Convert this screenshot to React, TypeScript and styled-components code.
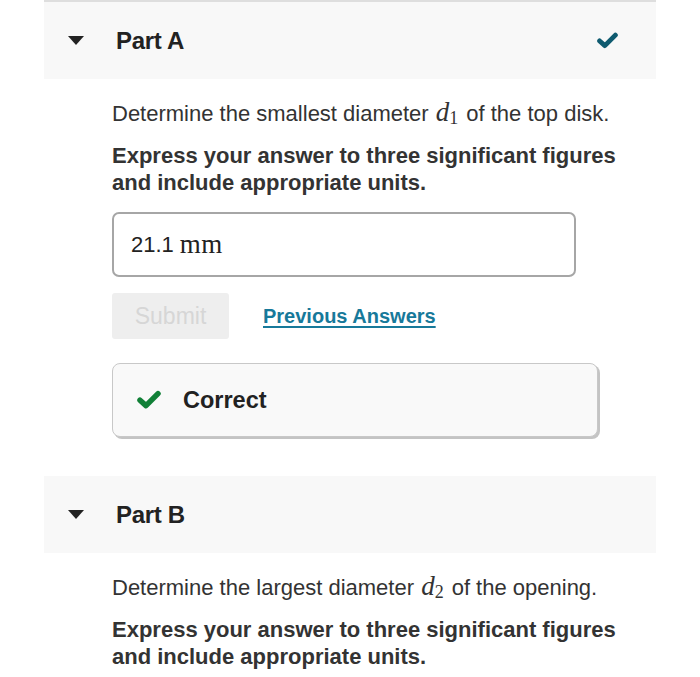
import React from "react";
import styled, { createGlobalStyle } from "styled-components";

const Global = createGlobalStyle`
  html, body { margin: 0; padding: 0; background: #fff; }
  body { font-family: "Liberation Sans", Arial, sans-serif; color: #333; }
`;

const Page = styled.div`
  width: 612px;
  margin: 0 44px;
  border-top: 2px solid #dedede;
`;

const Header = styled.div`
  height: 77px;
  background: #f8f8f8;
  display: flex;
  align-items: center;
  padding: 0 38px 0 24px;
`;

const Caret = styled.span`
  width: 0;
  height: 0;
  border-left: 8px solid transparent;
  border-right: 8px solid transparent;
  border-top: 9px solid #222;
  margin-right: 32px;
`;

const PartTitle = styled.h2`
  flex: 1;
  margin: 0;
  font-size: 24px;
  font-weight: 700;
  color: #222;
  letter-spacing: -0.3px;
`;

const Body = styled.div<{ $pb?: number }>`
  padding: 20px 0 ${(p) => p.$pb ?? 39}px 68px;
`;

const Prompt = styled.p`
  margin: 0 0 11px;
  font-size: 22px;
  line-height: 26px;
  color: #333;
`;

const Instr = styled.p`
  margin: 0;
  font-size: 22px;
  line-height: 27px;
  font-weight: 700;
  color: #333;
`;

const MathVar = styled.span`
  font-family: "Liberation Serif", "Times New Roman", serif;
  font-style: italic;
  font-size: 27px;
  margin: 0 8px 0 1px;
  sub {
    font-style: normal;
    font-size: 18px;
    vertical-align: -3px;
  }
`;

const Answer = styled.div`
  margin-top: 16px;
  width: 464px;
  height: 65px;
  box-sizing: border-box;
  border: 2px solid #a6a6a6;
  border-radius: 7px;
  display: flex;
  align-items: center;
  padding-left: 17px;
  font-size: 22px;
  color: #222;
`;

const Unit = styled.span`
  font-family: "Liberation Serif", "Times New Roman", serif;
  font-size: 27px;
  letter-spacing: 0.5px;
  margin-left: 6px;
`;

const Actions = styled.div`
  display: flex;
  align-items: center;
  margin-top: 16px;
  gap: 34px;
`;

const SubmitBtn = styled.button`
  width: 117px;
  height: 46px;
  border: none;
  border-radius: 3px;
  background: #eeeeee;
  color: #d6d6d6;
  font-family: "Liberation Sans", Arial, sans-serif;
  font-size: 23px;
  padding: 0;
`;

const PrevLink = styled.a`
  color: #17799a;
  font-weight: 700;
  font-size: 20px;
  text-decoration: underline;
  text-underline-offset: 3px;
`;

const Feedback = styled.div`
  margin-top: 24px;
  width: 486px;
  height: 74px;
  box-sizing: border-box;
  border: 1px solid #c8c8c8;
  border-radius: 8px;
  background: #f9f9f9;
  box-shadow: 2px 2px 0 #c4c4c4;
  display: flex;
  align-items: center;
  padding-left: 24px;
  gap: 22px;
`;

const FeedbackText = styled.span`
  font-size: 23.5px;
  font-weight: 700;
  color: #222;
`;

const Check = ({ color, size }: { color: string; size: number }) => (
  <svg width={size} height={size * 0.8} viewBox="0 0 20 16">
    <path d="M2.5 8.5 L7.5 13 L17.5 3" fill="none" stroke={color} strokeWidth="4.6" strokeLinecap="round" strokeLinejoin="round" />
  </svg>
);

export default function App() {
  return (
    <>
      <Global />
      <Page>
        <Header>
          <Caret />
          <PartTitle>Part A</PartTitle>
          <Check color="#0f5b70" size={21} />
        </Header>
        <Body>
          <Prompt>
            Determine the smallest diameter <MathVar>d<sub>1</sub></MathVar>of the top disk.
          </Prompt>
          <Instr>
            Express your answer to three significant figures
            <br />
            and include appropriate units.
          </Instr>
          <Answer>
            21.1<Unit>mm</Unit>
          </Answer>
          <Actions>
            <SubmitBtn disabled>Submit</SubmitBtn>
            <PrevLink href="#">Previous Answers</PrevLink>
          </Actions>
          <Feedback>
            <Check color="#118037" size={24} />
            <FeedbackText>Correct</FeedbackText>
          </Feedback>
        </Body>
        <Header>
          <Caret />
          <PartTitle>Part B</PartTitle>
        </Header>
        <Body $pb={20}>
          <Prompt>
            Determine the largest diameter <MathVar>d<sub>2</sub></MathVar>of the opening.
          </Prompt>
          <Instr>
            Express your answer to three significant figures
            <br />
            and include appropriate units.
          </Instr>
        </Body>
      </Page>
    </>
  );
}
